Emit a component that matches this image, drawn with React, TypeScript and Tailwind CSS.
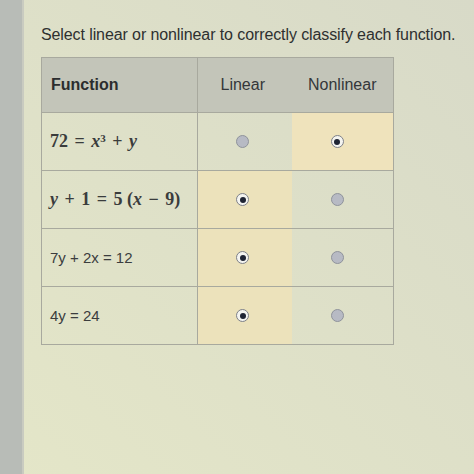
import React from 'react';

type Choice = 'linear' | 'nonlinear'

interface Row {
  id: number
  label: React.ReactNode
  choice: Choice
  math?: boolean
}

const serif = { fontFamily: '"Liberation Serif", "DejaVu Serif", serif' }

function I({ children }: { children: React.ReactNode }) {
  return <span className="italic">{children}</span>
}

const rows: Row[] = [
  {
    id: 1,
    math: true,
    choice: 'nonlinear',
    label: (
      <>
        72 <span className="mx-[2px]">=</span> <I>x</I>
        <sup className="text-[11px]">3</sup> <span className="mx-[2px]">+</span> <I>y</I>
      </>
    ),
  },
  {
    id: 2,
    math: true,
    choice: 'linear',
    label: (
      <>
        <I>y</I> <span className="mx-[2px]">+</span> 1 <span className="mx-[2px]">=</span> 5 (<I>x</I>{' '}
        <span className="mx-[2px]">−</span> 9)
      </>
    ),
  },
  { id: 3, choice: 'linear', label: '7y + 2x = 12' },
  { id: 4, choice: 'linear', label: '4y = 24' },
]

function Radio({ checked }: { checked: boolean }) {
  if (checked) {
    return (
      <span className="flex h-[13px] w-[13px] items-center justify-center rounded-full border border-[#7d8088] bg-[#f4f4f0]">
        <span className="h-[6px] w-[6px] rounded-full bg-[#1e2433]" />
      </span>
    )
  }
  return <span className="block h-[13px] w-[13px] rounded-full border border-[#8f939b] bg-[#b7bac4]" />
}

export default function App() {
  return (
    <div
      className="flex h-[474px] w-[474px] overflow-hidden bg-linear-to-tr from-[#e4e6c8] to-[#d8dac8] text-[#2a2c2c]"
      style={{ fontFamily: '"Liberation Sans", Arial, sans-serif' }}
    >
      <div className="w-[24px] shrink-0 border-r-2 border-[#c9cbc0] bg-[#b8bcb7]" />

      <div className="flex flex-col pl-[17px] pt-[25px]">
        <p className="whitespace-nowrap text-[16px] leading-[20px] tracking-[-0.1px] text-[#2e3030]">
          Select linear or nonlinear to correctly classify each function.
        </p>

        <table className="mt-[12px] w-[353px] border-collapse border border-[#a8a99e] text-[16px]">
          <thead>
            <tr className="h-[55px] bg-[#c3c5b9]">
              <th className="w-[156px] border-r border-[#a8a99e] pl-[9px] text-left font-bold text-[#2b2d2e]">Function</th>
              <th className="w-[94px] pr-[4px] text-center font-normal text-[#34373a]">Linear</th>
              <th className="text-center font-normal text-[#34373a]">Nonlinear</th>
            </tr>
          </thead>
          <tbody>
            {rows.map((row) => (
              <tr key={row.id} className="h-[58px] border-t border-[#a8a99e]">
                <td className="border-r border-[#a8a99e] pl-[8px]">
                  {row.math ? (
                    <span className="text-[18px] font-bold text-[#3a3c3c]" style={serif}>
                      {row.label}
                    </span>
                  ) : (
                    <span className="text-[15px] text-[#3b3d3e]">{row.label}</span>
                  )}
                </td>
                <td className={row.choice === 'linear' ? 'bg-[#ece2bb]' : ''}>
                  <div className="flex justify-center pr-[4px]">
                    <Radio checked={row.choice === 'linear'} />
                  </div>
                </td>
                <td className={row.choice === 'nonlinear' ? 'bg-[#efe3bc]' : ''}>
                  <div className="flex justify-center pr-[10px]">
                    <Radio checked={row.choice === 'nonlinear'} />
                  </div>
                </td>
              </tr>
            ))}
          </tbody>
        </table>
      </div>
    </div>
  )
}
